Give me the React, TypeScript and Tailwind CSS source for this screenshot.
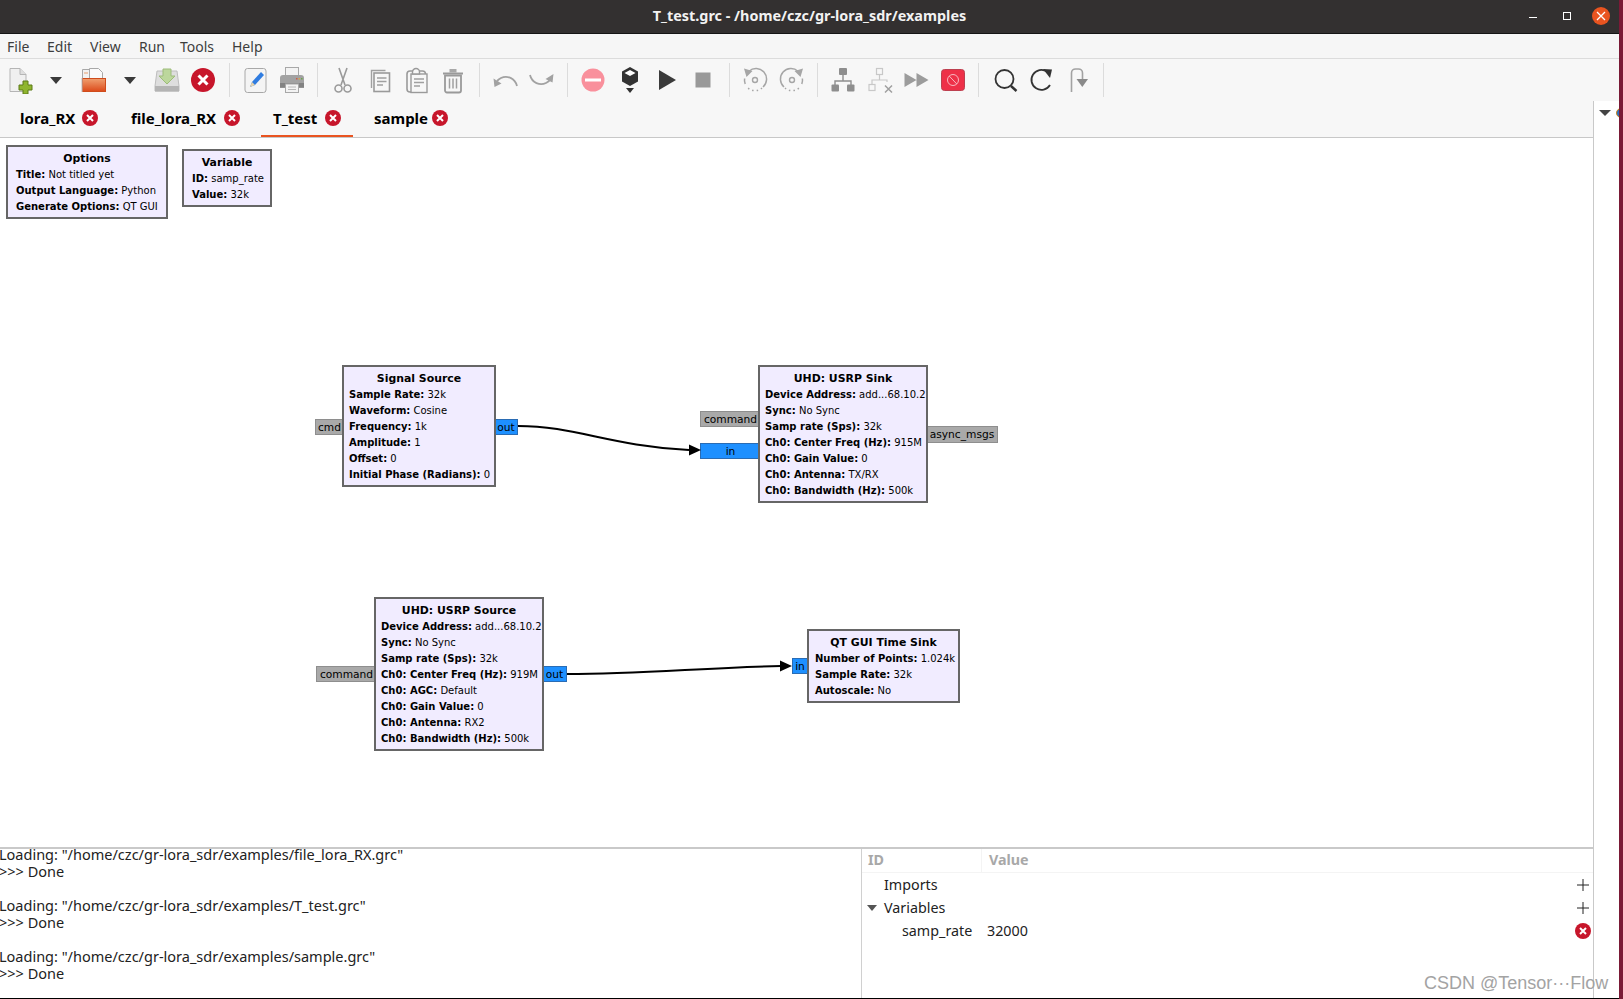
import { ReactNode } from "react";

const uiFont = "font-['Noto_Sans',sans-serif]";
const blockFont = "font-['DejaVu_Sans',sans-serif]";

type IconProps = { children: ReactNode };

const Ico = ({ children }: IconProps) => (
  <svg width="28" height="28" viewBox="0 0 28 28" fill="none">
    {children}
  </svg>
);

const NewIcon = () => (
  <Ico>
    <path d="M5 2.5h10l6 6v17H5z" fill="#f0f0f0" stroke="#b5b5b5" />
    <path d="M15 2.5v6h6" fill="#dedede" stroke="#b5b5b5" />
    <path d="M14 19h4v-4h5v4h4v5h-4v4h-5v-4h-4z" fill="#8fb52e" stroke="#5c7a16" />
  </Ico>
);

const OpenIcon = () => (
  <Ico>
    <defs>
      <linearGradient id="folderFill" x1="0" y1="0" x2="0" y2="1">
        <stop offset="0" stopColor="#f0a070" />
        <stop offset="1" stopColor="#dc4a1a" />
      </linearGradient>
    </defs>
    <path d="M3.5 3.5h9l2 2v8h-11z" fill="#f2f2f2" stroke="#a8a8a8" />
    <path d="M10.5 2.5h9l4 4v8h-13z" fill="#fafafa" stroke="#a8a8a8" />
    <path d="M5 7h4" stroke="#e8a070" />
    <rect x="3.5" y="12.5" width="23" height="13" fill="url(#folderFill)" stroke="#cf4c1c" />
    <path d="M3 26V12" stroke="#bdbdbd" />
  </Ico>
);

const SaveIcon = () => (
  <Ico>
    <path d="M4 5h20l2 15v5H2v-5z" fill="#dedede" stroke="#bdbdbd" />
    <rect x="2" y="20" width="24" height="5.5" fill="#b4b4b4" />
    <path d="M10 3h8v7h4l-8 8-8-8h4z" fill="#bcd79c" stroke="#9dbc7a" />
  </Ico>
);

const CloseDisc = ({ size = 24 }: { size?: number }) => (
  <svg width={size} height={size} viewBox="0 0 24 24">
    <circle cx="12" cy="12" r="12" fill="#c7162b" />
    <path d="M7.5 7.5l9 9M16.5 7.5l-9 9" stroke="#fff" strokeWidth="3" />
  </svg>
);

const EditIcon = () => (
  <Ico>
    <rect x="4" y="2.5" width="21" height="24" rx="2.5" fill="#f4f4f4" stroke="#a8a8a8" />
    <path d="M9 21l2-5 9-10 3 3-9 10z" fill="#2f7ce0" />
    <path d="M9 21l2-5 3 3z" fill="#e9d3a8" />
  </Ico>
);

const PrintIcon = () => (
  <Ico>
    <rect x="7.5" y="1.5" width="13" height="8" fill="#f3f3f3" stroke="#a8a8a8" />
    <path d="M2 12a3 3 0 0 1 3-3h18a3 3 0 0 1 3 3v10H2z" fill="#a2a2a2" />
    <rect x="2" y="17" width="24" height="4.5" fill="#828282" />
    <rect x="18" y="12" width="1.5" height="1.5" fill="#d05a4a" />
    <rect x="20.5" y="12" width="1.5" height="1.5" fill="#d0a84a" />
    <rect x="23" y="12" width="1.5" height="1.5" fill="#6aa84a" />
    <rect x="7.5" y="18" width="13" height="8.5" fill="#f3f3f3" stroke="#a8a8a8" />
    <path d="M10 21h8M10 23.5h8" stroke="#b8b8b8" />
  </Ico>
);

const CutIcon = () => (
  <Ico>
    <path d="M10 2l6 17M18 2l-6 17" stroke="#9a9a9a" strokeWidth="1.6" />
    <circle cx="9.5" cy="22.5" r="3.5" stroke="#9a9a9a" strokeWidth="1.6" />
    <circle cx="18.5" cy="22.5" r="3.5" stroke="#9a9a9a" strokeWidth="1.6" />
  </Ico>
);

const CopyIcon = () => (
  <Ico>
    <path d="M5.5 22V4.5h14" stroke="#a0a0a0" strokeWidth="1.4" />
    <rect x="8" y="7" width="15.5" height="18.5" fill="#f7f7f7" stroke="#9a9a9a" strokeWidth="1.6" />
    <path d="M11 12h9.5M11 15.5h9.5M11 19h6" stroke="#a0a0a0" strokeWidth="1.4" />
  </Ico>
);

const PasteIcon = () => (
  <Ico>
    <rect x="4" y="5" width="18.5" height="21" rx="3" stroke="#9a9a9a" strokeWidth="1.6" />
    <rect x="8" y="8" width="16" height="18.5" fill="#f7f7f7" stroke="#9a9a9a" strokeWidth="1.4" />
    <path d="M9.5 6a3.5 3.5 0 0 1 7 0v2h-7z" fill="#f7f7f7" stroke="#9a9a9a" strokeWidth="1.4" />
    <path d="M11 13h10M11 16.5h10M11 20h6" stroke="#a0a0a0" strokeWidth="1.4" />
  </Ico>
);

const TrashIcon = () => (
  <Ico>
    <path d="M4 7.5h20" stroke="#9a9a9a" strokeWidth="2" />
    <rect x="10.5" y="3" width="7" height="3.5" fill="#a8a8a8" />
    <path d="M6 9.5h16v15a2 2 0 0 1-2 2H8a2 2 0 0 1-2-2z" stroke="#9a9a9a" strokeWidth="1.8" />
    <path d="M10.5 12.5v10M14 12.5v10M17.5 12.5v10" stroke="#a0a0a0" strokeWidth="1.5" />
  </Ico>
);

const UndoIcon = () => (
  <Ico>
    <path d="M26 20C24 12 16 9 10 12c-2 1-3 2-4 3" stroke="#a2a2a2" strokeWidth="1.8" />
    <path d="M2.5 12.5l1 8.5 7-3.5z" fill="#a2a2a2" />
  </Ico>
);

const RedoIcon = () => (
  <Ico>
    <path d="M2 9c2 8 10 11 16 8 2-1 3-2 4-3" stroke="#a2a2a2" strokeWidth="1.8" />
    <path d="M25.5 8l-1 8.5-7-3.5z" fill="#a2a2a2" />
  </Ico>
);

const DisableIcon = () => (
  <Ico>
    <circle cx="14" cy="14" r="11.5" fill="#f9909c" />
    <rect x="6" y="12.5" width="16" height="3" fill="#fff" />
  </Ico>
);

const GenIcon = () => (
  <Ico>
    <path d="M14 1l8 4.5v10L14 20l-8-4.5v-10z" fill="#333" />
    <path d="M14 4l5.5 3L14 10 8.5 7z" fill="#fff" />
    <path d="M10 22h8l-4 5z" fill="#333" />
  </Ico>
);

const PlayIcon = () => (
  <Ico>
    <path d="M6 4l17 10L6 24z" fill="#3b3b3b" />
  </Ico>
);

const HaltIcon = () => (
  <Ico>
    <rect x="6.5" y="6.5" width="15" height="15" fill="#999" />
  </Ico>
);

const ReloadDisc = ({ flip }: { flip?: boolean }) => (
  <Ico>
    <g transform={flip ? "matrix(-1 0 0 1 28 0)" : undefined}>
      <path d="M8 5.2A10.5 10.5 0 0 1 22 21" stroke="#a6a6a6" strokeWidth="1.5" />
      <path d="M21 22A10.5 10.5 0 0 1 6 21" stroke="#a6a6a6" strokeWidth="1.5" strokeDasharray="1.5 3" />
      <path d="M4.2 18A10.5 10.5 0 0 1 3.6 12.5" stroke="#a6a6a6" strokeWidth="1.5" />
      <path d="M3 2.5l8.5 2.5-6 6z" fill="#a6a6a6" />
      <circle cx="14" cy="14" r="2.5" stroke="#a6a6a6" strokeWidth="1.4" />
    </g>
  </Ico>
);

const TreeIcon = () => (
  <Ico>
    <rect x="10" y="2" width="8" height="7" rx="1" fill="#8e8e8e" />
    <path d="M14 9v6M6 19v-4h16v4" stroke="#8e8e8e" strokeWidth="1.4" />
    <rect x="2.5" y="18.5" width="7.5" height="7" rx="1" fill="#8e8e8e" />
    <rect x="18" y="18.5" width="7.5" height="7" rx="1" fill="#8e8e8e" />
  </Ico>
);

const TreeXIcon = () => (
  <Ico>
    <rect x="10.5" y="2.5" width="6" height="6" stroke="#c8c8c8" strokeWidth="1.2" />
    <path d="M13.5 9v5M6 18v-4h15v2" stroke="#c8c8c8" strokeWidth="1.2" />
    <rect x="3" y="18.5" width="6" height="6" stroke="#c8c8c8" strokeWidth="1.2" />
    <path d="M19 19.5l7 7M26 19.5l-7 7" stroke="#9f9f9f" strokeWidth="1.5" />
  </Ico>
);

const ForwardIcon = () => (
  <Ico>
    <path d="M2.5 7l12 7-12 7zM14.5 7l12 7-12 7z" fill="#9c9c9c" />
  </Ico>
);

const BlockedIcon = () => (
  <Ico>
    <rect x="2.5" y="3.5" width="23" height="21" rx="3" fill="#ee3048" stroke="#bd4050" />
    <circle cx="14" cy="14" r="5.5" stroke="#f9b6be" strokeWidth="1" />
    <path d="M10.2 10l7.6 8" stroke="#f9b6be" strokeWidth="1" />
  </Ico>
);

const SearchIcon = () => (
  <Ico>
    <circle cx="13.5" cy="13" r="9" stroke="#333" strokeWidth="1.8" />
    <path d="M20 20l5.5 5" stroke="#333" strokeWidth="2.4" />
  </Ico>
);

const RefreshIcon = () => (
  <Ico>
    <path d="M20 5.5A10 10 0 1 0 23 19" stroke="#333" strokeWidth="1.8" />
    <path d="M16 3l9 .5-2 8.5z" fill="#333" />
  </Ico>
);

const BentIcon = () => (
  <Ico>
    <path d="M7.5 26V7a4 4 0 0 1 4-4h3a4 4 0 0 1 4 4v7" stroke="#a2a2a2" strokeWidth="1.6" />
    <path d="M12.5 12h11.5l-5.7 8z" transform="translate(0 1)" fill="#8a8a8a" />
  </Ico>
);

const Caret = () => (
  <svg width="12" height="7" viewBox="0 0 12 7">
    <path d="M0 0h12L6 7z" fill="#3a3a3a" />
  </svg>
);

const Tool = ({ children }: { children: ReactNode }) => (
  <div className="w-[36.8px] flex items-center justify-center shrink-0">{children}</div>
);

const Sep = () => <div className="w-px h-[34px] mx-[6.8px] bg-[#dcdcdc] shrink-0" />;

const Toolbar = () => (
  <div className="h-[42px] bg-[#f7f7f7] flex items-center pl-[1px]">
    <Tool><NewIcon /></Tool>
    <Tool><Caret /></Tool>
    <Tool><OpenIcon /></Tool>
    <Tool><Caret /></Tool>
    <Tool><SaveIcon /></Tool>
    <Tool><CloseDisc /></Tool>
    <Sep />
    <Tool><EditIcon /></Tool>
    <Tool><PrintIcon /></Tool>
    <Sep />
    <Tool><CutIcon /></Tool>
    <Tool><CopyIcon /></Tool>
    <Tool><PasteIcon /></Tool>
    <Tool><TrashIcon /></Tool>
    <Sep />
    <Tool><UndoIcon /></Tool>
    <Tool><RedoIcon /></Tool>
    <Sep />
    <Tool><DisableIcon /></Tool>
    <Tool><GenIcon /></Tool>
    <Tool><PlayIcon /></Tool>
    <Tool><HaltIcon /></Tool>
    <Sep />
    <Tool><ReloadDisc /></Tool>
    <Tool><ReloadDisc flip /></Tool>
    <Sep />
    <Tool><TreeIcon /></Tool>
    <Tool><TreeXIcon /></Tool>
    <Tool><ForwardIcon /></Tool>
    <Tool><BlockedIcon /></Tool>
    <Sep />
    <Tool><SearchIcon /></Tool>
    <Tool><RefreshIcon /></Tool>
    <Tool><BentIcon /></Tool>
    <Sep />
  </div>
);

const menus = [
  { label: "File", w: "w-[40px]" },
  { label: "Edit", w: "w-[43px]" },
  { label: "View", w: "w-[49px]" },
  { label: "Run", w: "w-[41px]" },
  { label: "Tools", w: "w-[52px]" },
  { label: "Help", w: "w-[50px]" },
];

const tabs = [
  { label: "lora_RX", w: "w-[102px]", active: false },
  { label: "file_lora_RX", w: "w-[133px]", active: false },
  { label: "T_test", w: "w-[92px]", active: true },
  { label: "sample", w: "w-[98px]", active: false },
];

const Tabs = () => (
  <div className="h-[37px] bg-[#f7f7f7] border-b border-[#c8c8c8] flex gap-[9px] pl-[8px] shrink-0">
    {tabs.map((t) => (
      <div
        key={t.label}
        className={`${t.w} h-[36px] px-[12px] flex items-center justify-between border-b-2 ${
          t.active ? "border-[#e95420]" : "border-transparent"
        }`}
      >
        <span className="text-[15px] font-bold text-black">{t.label}</span>
        <CloseDisc size={16} />
      </div>
    ))}
  </div>
);

type BlockProps = {
  x: number;
  y: number;
  w: number;
  pad?: number;
  title: string;
  rows: [string, string][];
};

const Block = ({ x, y, w, pad = 5, title, rows }: BlockProps) => (
  <div
    className="absolute border-2 border-[#666666] bg-[#f1ecff] pt-[4px] pb-[2px] text-[10px] leading-[16px] text-black whitespace-nowrap z-10"
    style={{ left: x, top: y - 138, width: w, paddingLeft: pad }}
  >
    <div className="text-center font-bold text-[10.9px]" style={{ marginLeft: -pad }}>{title}</div>
    {rows.map(([k, v]) => (
      <div key={k}>
        <span className="font-bold">{k}:</span> {v}
      </div>
    ))}
  </div>
);

type PortProps = { x: number; y: number; w: number; h?: number; label: string; blue?: boolean };

const Port = ({ x, y, w, h = 16, label, blue }: PortProps) => (
  <div
    className={`absolute border-[1.5px] pt-[1px] text-[10.67px] flex items-center justify-center text-black whitespace-nowrap ${
      blue ? "bg-[#1e90ff] border-[#2a6cb4]" : "bg-[#a9a9a9] border-[#8e8e8e]"
    }`}
    style={{ left: x, top: y - 138, width: w, height: h }}
  >
    {label}
  </div>
);

const Canvas = () => (
  <div className={`relative flex-1 bg-white overflow-hidden ${blockFont}`}>
    <Block x={6} y={145} w={162} pad={8} title="Options" rows={[["Title", "Not titled yet"], ["Output Language", "Python"], ["Generate Options", "QT GUI"]]} />
    <Block x={182} y={149} w={90} pad={8} title="Variable" rows={[["ID", "samp_rate"], ["Value", "32k"]]} />

    <Port x={315} y={419} w={29} label="cmd" />
    <Port x={494} y={419} w={24} label="out" blue />
    <Block x={342} y={365} w={154} title="Signal Source" rows={[["Sample Rate", "32k"], ["Waveform", "Cosine"], ["Frequency", "1k"], ["Amplitude", "1"], ["Offset", "0"], ["Initial Phase (Radians)", "0"]]} />

    <Port x={700} y={411} w={61} label="command" />
    <Port x={700} y={443} w={61} label="in" blue />
    <Port x={926} y={426} w={72} h={17} label="async_msgs" />
    <Block x={758} y={365} w={170} title="UHD: USRP Sink" rows={[["Device Address", "add...68.10.2"], ["Sync", "No Sync"], ["Samp rate (Sps)", "32k"], ["Ch0: Center Freq (Hz)", "915M"], ["Ch0: Gain Value", "0"], ["Ch0: Antenna", "TX/RX"], ["Ch0: Bandwidth (Hz)", "500k"]]} />

    <Port x={316} y={666} w={61} label="command" />
    <Port x={542} y={666} w={25} label="out" blue />
    <Block x={374} y={597} w={170} title="UHD: USRP Source" rows={[["Device Address", "add...68.10.2"], ["Sync", "No Sync"], ["Samp rate (Sps)", "32k"], ["Ch0: Center Freq (Hz)", "919M"], ["Ch0: AGC", "Default"], ["Ch0: Gain Value", "0"], ["Ch0: Antenna", "RX2"], ["Ch0: Bandwidth (Hz)", "500k"]]} />

    <Port x={792} y={658} w={16} label="in" blue />
    <Block x={807} y={629} w={153} pad={6} title="QT GUI Time Sink" rows={[["Number of Points", "1.024k"], ["Sample Rate", "32k"], ["Autoscale", "No"]]} />

    <svg className="absolute left-0 top-0" width="1593" height="710" fill="none">
      <path d="M518 288 C 575 288, 610 308, 689 312" stroke="#000" strokeWidth="2" />
      <path d="M689 306.5 L701 312 L689 317.5z" fill="#000" />
      <path d="M567 536 C 640 536, 700 530, 781 528" stroke="#000" strokeWidth="2" />
      <path d="M780 522.5 L792 528 L780 533.5z" fill="#000" />
    </svg>
  </div>
);

const termLines = [
  'Loading: "/home/czc/gr-lora_sdr/examples/file_lora_RX.grc"',
  ">>> Done",
  "",
  'Loading: "/home/czc/gr-lora_sdr/examples/T_test.grc"',
  ">>> Done",
  "",
  'Loading: "/home/czc/gr-lora_sdr/examples/sample.grc"',
  ">>> Done",
];

const Plus = () => (
  <svg width="12" height="12" viewBox="0 0 12 12">
    <path d="M6 0v12M0 6h12" stroke="#222" strokeWidth="1" />
  </svg>
);

const VarPanel = () => (
  <div className="flex-1 bg-white text-[14.3px] text-[#222]">
    <div className="h-[24px] flex items-center font-bold text-[#a8a8a8] border-b border-[#f4f4f4]">
      <div className="w-[120px] h-full pl-[6px] pb-[2px] flex items-center border-r border-[#f4f4f4]">ID</div>
      <div className="pl-[7px] pb-[2px]">Value</div>
    </div>
    <div className="h-[23px] flex items-center justify-between pl-[22px] pr-[4px]">
      <span>Imports</span>
      <Plus />
    </div>
    <div className="h-[23px] flex items-center justify-between pl-[5px] pr-[4px]">
      <span className="flex items-center gap-[7px]">
        <svg width="10" height="6" viewBox="0 0 10 6">
          <path d="M0 0h10L5 6z" fill="#555" />
        </svg>
        Variables
      </span>
      <Plus />
    </div>
    <div className="h-[23px] flex items-center pr-[2px]">
      <span className="w-[120px] pl-[40px]">samp_rate</span>
      <span className="pl-[5px] flex-1">32000</span>
      <CloseDisc size={16} />
    </div>
  </div>
);

const App = () => (
  <div className={`relative w-[1623px] h-[999px] bg-[#7a1a36] overflow-hidden ${uiFont}`}>
    <div className="w-[1619px] h-[999px] flex flex-col bg-white">
      <div className="relative h-[34px] pb-[2px] shrink-0 bg-[#333030] border-b border-[#151515] flex items-center justify-center">
        <span className="text-[14.4px] font-bold text-[#f2f2f2]">T_test.grc - /home/czc/gr-lora_sdr/examples</span>
        <div className="absolute right-[9px] top-0 h-[31px] flex items-center">
          <div className="w-[8px] h-[1px] bg-white mt-[4px]" />
          <div className="w-[8px] h-[8px] border border-white ml-[26px]" />
          <div className="w-[18px] h-[18px] rounded-full bg-[#e95420] flex items-center justify-center ml-[21px]">
            <svg width="10" height="10" viewBox="0 0 10 10">
              <path d="M1 1l8 8M9 1l-8 8" stroke="#fff" strokeWidth="1.3" />
            </svg>
          </div>
        </div>
      </div>

      <div className="h-[25px] shrink-0 bg-[#f6f6f6] border-b border-[#dcdcdc] flex items-center text-[14px] text-[#3d3d3d]">
        {menus.map((m) => (
          <div key={m.label} className={`${m.w} pl-[7px]`}>{m.label}</div>
        ))}
      </div>

      <Toolbar />

      <div className="flex-1 flex min-h-0">
        <div className="flex-1 flex flex-col min-w-0">
          <Tabs />
          <Canvas />
          <div className="h-[151px] shrink-0 flex border-t-2 border-[#c9c9c9] bg-white">
            <div className="w-[862px] shrink-0 border-r border-[#d0d0d0] text-[14.5px] leading-[17px] text-[#222] overflow-hidden">
              <div className="-mt-[3px] -ml-[1px]">
                {termLines.map((l, i) => (
                  <div key={i} className="h-[17px] whitespace-nowrap">{l}</div>
                ))}
              </div>
            </div>
            <VarPanel />
          </div>
        </div>
        <div className="w-[26px] shrink-0 bg-white border-l border-[#c9c9c9] relative overflow-hidden">
          <div className="absolute left-[5px] top-[9px]">
            <svg width="12" height="6" viewBox="0 0 12 6">
              <path d="M0 0h12L6 6z" fill="#444" />
            </svg>
          </div>
          <div className="absolute left-[22px] top-[7px] w-[10px] h-[10px] rounded-full bg-[#2f6fc0] border border-[#c8861a]" />
        </div>
      </div>
      <div className="h-px shrink-0 bg-black" />
    </div>
    <div className="absolute left-[1424px] top-[971px] text-[18px] leading-[24px] text-[#a3a3a3] font-['Liberation_Sans',sans-serif] whitespace-nowrap">
      CSDN @Tensor···Flow
    </div>
  </div>
);

export default App;
